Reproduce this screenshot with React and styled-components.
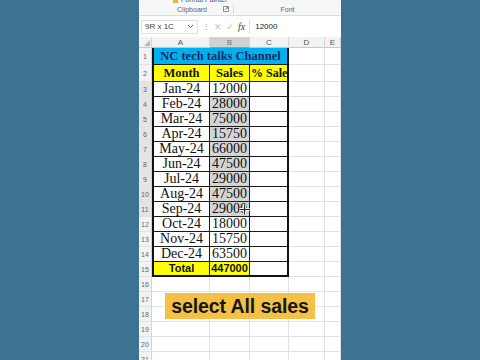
import React from "react";
import styled, { createGlobalStyle } from "styled-components";

const GlobalStyle = createGlobalStyle`
  html, body {
    margin: 0;
    padding: 0;
    background: #3b7391;
  }
`;

const Frame = styled.div`
  width: 480px;
  height: 360px;
  display: flex;
  justify-content: center;
  background: #3b7391;
  overflow: hidden;
`;

const Panel = styled.div`
  position: relative;
  width: 202px;
  height: 360px;
  background: #ffffff;
  display: flex;
  flex-direction: column;
  overflow: hidden;
  font-family: "Liberation Sans", Arial, sans-serif;
  & > * {
    flex-shrink: 0;
  }
`;

const Ribbon = styled.div`
  height: 16px;
  background: #f7f7f7;
  border-bottom: 1px solid #dcdcdc;
  display: flex;
  flex-direction: column;
  box-sizing: border-box;
`;

const TopStrip = styled.div`
  height: 3px;
  overflow: hidden;
  display: flex;
  align-items: flex-end;
  padding-left: 34px;
  gap: 3px;
  font-size: 7px;
  color: #555;
  line-height: 7px;
  flex-shrink: 0;
`;

const Brush = styled.span`
  width: 5px;
  height: 7px;
  background: #e8b92c;
  display: inline-block;
`;

const Groups = styled.div`
  flex: 1;
  display: flex;
  align-items: center;
  font-size: 7px;
  color: #666;
`;

const Group = styled.div`
  width: ${(p) => p.$w}px;
  display: flex;
  align-items: center;
  justify-content: ${(p) => p.$justify || "center"};
  gap: 4px;
  padding-right: ${(p) => p.$pr || 0}px;
  box-sizing: border-box;
  border-right: ${(p) => (p.$sep ? "1px solid #dcdcdc" : "none")};
  height: 9px;
`;

const FormulaBar = styled.div`
  height: 21px;
  display: flex;
  align-items: center;
  padding: 0 2px;
  gap: 4px;
  font-size: 8px;
  color: #333;
  box-sizing: border-box;
`;

const NameBox = styled.div`
  width: 57px;
  height: 14px;
  border: 1px solid #e0e0e0;
  box-sizing: border-box;
  display: flex;
  align-items: center;
  justify-content: space-between;
  padding: 0 3px;
  color: #444;
`;

const Dim = styled.span`
  color: ${(p) => p.$c || "#c4c4c4"};
  font-size: ${(p) => p.$s || 8}px;
  font-style: ${(p) => (p.$i ? "italic" : "normal")};
  font-family: ${(p) => (p.$serif ? '"Liberation Serif", serif' : "inherit")};
`;

const Input = styled.div`
  flex: 1;
  height: 14px;
  display: flex;
  align-items: center;
  padding-left: 5px;
  border-left: 1px solid #e0e0e0;
  color: #222;
`;

const Sheet = styled.div`
  display: grid;
  grid-template-columns: 13px 58px 40px 39px 36px 16px;
  grid-template-rows: 11px 17px 17px;
  grid-auto-rows: 15px;
`;

const Corner = styled.div`
  background: #f3f3f3;
  border-right: 1px solid #d4d4d4;
  border-bottom: 1px solid #c8c8c8;
  box-sizing: border-box;
  display: flex;
  align-items: flex-end;
  justify-content: flex-end;
  padding: 1px;
`;

const ColHead = styled.div`
  background: ${(p) => (p.$sel ? "#d2d2d2" : "#f3f3f3")};
  color: ${(p) => (p.$sel ? "#777" : "#555")};
  border-right: 1px solid #d4d4d4;
  border-bottom: ${(p) => (p.$sel ? "1px solid #9a9a9a" : "1px solid #c8c8c8")};
  box-sizing: border-box;
  font-size: 8px;
  display: flex;
  align-items: center;
  justify-content: center;
`;

const RowHead = styled.div`
  background: ${(p) => (p.$sel ? "#e4e4e4" : "#f3f3f3")};
  color: #666;
  border-right: 1px solid #d4d4d4;
  border-bottom: 1px solid #e2e2e2;
  box-sizing: border-box;
  font-size: 7px;
  display: flex;
  align-items: center;
  justify-content: center;
`;

const Cell = styled.div`
  grid-column: span ${(p) => p.$span || 1};
  background: ${(p) => p.$bg || "#ffffff"};
  color: ${(p) => p.$color || "#111"};
  font-family: ${(p) =>
    p.$sans ? '"Liberation Sans", Arial, sans-serif' : '"Liberation Serif", "Times New Roman", serif'};
  font-weight: ${(p) => (p.$bold ? 700 : 400)};
  font-size: ${(p) => p.$size || 14}px;
  border-right: ${(p) => p.$r || "1px solid #e2e2e2"};
  border-bottom: ${(p) => p.$b || "1px solid #e2e2e2"};
  border-left: ${(p) => p.$l || "none"};
  box-sizing: border-box;
  display: flex;
  align-items: center;
  justify-content: ${(p) => p.$align || "center"};
  padding: 0 ${(p) => p.$pad ?? 2}px;
  white-space: nowrap;
  overflow: hidden;
  line-height: 1;
`;

const Caption = styled.div`
  position: absolute;
  left: 26px;
  top: 293px;
  width: 150px;
  height: 26px;
  background: #f4c045;
  display: flex;
  align-items: center;
  justify-content: center;
  font-family: "Liberation Sans", Arial, sans-serif;
  font-weight: 700;
  font-size: 19.5px;
  color: #161616;
  letter-spacing: -0.1px;
`;

const Cursor = styled.svg`
  position: absolute;
  left: 100px;
  top: 204px;
`;

const sales = [
  ["Jan-24", 12000],
  ["Feb-24", 28000],
  ["Mar-24", 75000],
  ["Apr-24", 15750],
  ["May-24", 66000],
  ["Jun-24", 47500],
  ["Jul-24", 29000],
  ["Aug-24", 47500],
  ["Sep-24", 29000],
  ["Oct-24", 18000],
  ["Nov-24", 15750],
  ["Dec-24", 63500],
];

const LINE = "1px solid #1a1a1a";
const THICK = "2px solid #111";

const EmptyCells = () => (
  <>
    <Cell />
    <Cell />
  </>
);

export default function App() {
  return (
    <Frame>
      <GlobalStyle />
      <Panel>
        <Ribbon>
          <TopStrip>
            <Brush />
            <span>Format Painter</span>
          </TopStrip>
          <Groups>
            <Group $w={95} $justify="flex-end" $pr={4} $sep>
              <span style={{ marginRight: 12 }}>Clipboard</span>
              <svg width="6" height="6" viewBox="0 0 6 6">
                <path d="M0.5 0.5h5v5h-5z M2 4l3-3 M3 1h2v2" fill="none" stroke="#777" strokeWidth="0.8" />
              </svg>
            </Group>
            <Group $w={107}>Font</Group>
          </Groups>
        </Ribbon>

        <FormulaBar>
          <NameBox>
            <span>9R x 1C</span>
            <svg width="7" height="5" viewBox="0 0 7 5">
              <path d="M1 1l2.5 2.5L6 1" fill="none" stroke="#666" strokeWidth="1" />
            </svg>
          </NameBox>
          <Dim $c="#999">⋮</Dim>
          <Dim $s={9}>✕</Dim>
          <Dim $s={9}>✓</Dim>
          <Dim $c="#444" $s={10} $i $serif>
            fx
          </Dim>
          <Input>12000</Input>
        </FormulaBar>

        <Sheet>
          <Corner>
            <svg width="6" height="6" viewBox="0 0 6 6">
              <path d="M6 0V6H0Z" fill="#b8b8b8" />
            </svg>
          </Corner>
          <ColHead>A</ColHead>
          <ColHead $sel>B</ColHead>
          <ColHead>C</ColHead>
          <ColHead>D</ColHead>
          <ColHead>E</ColHead>

          <RowHead>1</RowHead>
          <Cell $span={3} $bg="#00b0f0" $color="#1b2a5e" $bold $size={12.5} $pad={0} $l={THICK} $r={THICK} $b={LINE}>
            NC tech talks Channel
          </Cell>
          <EmptyCells />

          <RowHead>2</RowHead>
          <Cell $bg="#ffff00" $bold $size={12.5} $l={THICK} $r={LINE} $b={LINE}>
            Month
          </Cell>
          <Cell $bg="#ffff00" $bold $size={12.5} $r={LINE} $b={LINE}>
            Sales
          </Cell>
          <Cell $bg="#ffff00" $bold $size={12} $pad={1} $r={THICK} $b={LINE} $align="flex-start">
            % Sales
          </Cell>
          <EmptyCells />

          {sales.map(([m, v], i) => {
            const row = i + 3;
            const inSel = row >= 3 && row <= 11;
            const bBg = inSel && row !== 3 ? "#d4d4d4" : "#ffffff";
            return (
              <React.Fragment key={m}>
                <RowHead $sel={inSel}>{row}</RowHead>
                <Cell $l={THICK} $r={LINE} $b={LINE}>
                  {m}
                </Cell>
                <Cell $bg={bBg} $r={LINE} $b={LINE}>
                  {v}
                </Cell>
                <Cell $r={THICK} $b={LINE} />
                <EmptyCells />
              </React.Fragment>
            );
          })}

          <RowHead>15</RowHead>
          <Cell $bg="#ffff00" $sans $bold $size={11} $l={THICK} $r={LINE} $b={THICK}>
            Total
          </Cell>
          <Cell $bg="#ffff00" $sans $bold $size={11} $r={LINE} $b={THICK}>
            447000
          </Cell>
          <Cell $r={THICK} $b={THICK} />
          <EmptyCells />

          {[16, 17, 18, 19, 20, 21].map((n) => (
            <React.Fragment key={n}>
              <RowHead>{n}</RowHead>
              <Cell />
              <Cell />
              <Cell />
              <EmptyCells />
            </React.Fragment>
          ))}
        </Sheet>

        <Cursor width="11" height="11" viewBox="0 0 11 11">
          <path d="M5.5 0.5v10M0.5 5.5h10" stroke="#fff" strokeWidth="3" />
          <path d="M5.5 0.5v10M0.5 5.5h10" stroke="#222" strokeWidth="1.2" />
        </Cursor>

        <Caption>select All sales</Caption>
      </Panel>
    </Frame>
  );
}
